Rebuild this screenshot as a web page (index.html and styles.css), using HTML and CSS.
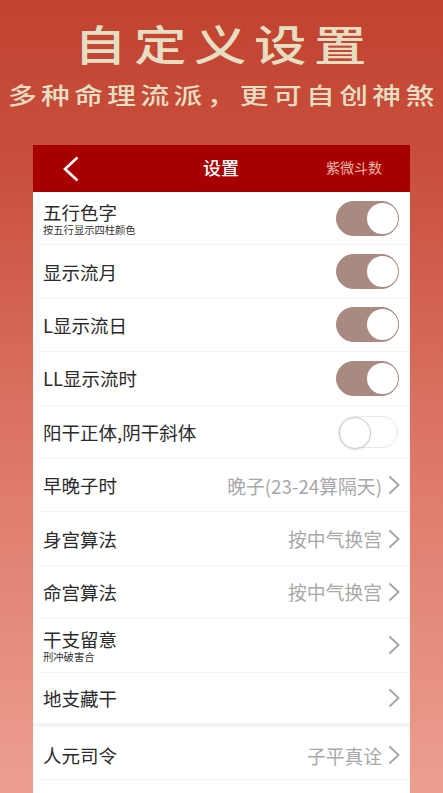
FILE: index.html
```html
<!DOCTYPE html>
<html lang="zh">
<head>
<meta charset="utf-8">
<title>自定义设置</title>
<link rel="stylesheet" href="styles.css">
</head>
<body>
<header class="promo">
  <h1 class="promo-title">自定义设置</h1>
  <p class="promo-sub">多种命理流派，更可自创神煞</p>
</header>
<main class="card">
  <div class="nav">
    <svg class="nav-back" width="18" height="26" viewBox="0 0 18 26"><path d="M15.500 1.500 L3 13 L15.500 24.500" fill="none" stroke="#fff" stroke-width="2.600"/></svg>
    <div class="nav-title">设置</div>
    <div class="nav-right">紫微斗数</div>
  </div>
  <div class="row"><div class="label"><div>五行色字</div><div class="hint">按五行显示四柱颜色</div></div><span class="switch on"></span></div>
  <div class="row"><div class="label">显示流月</div><span class="switch on"></span></div>
  <div class="row"><div class="label">L显示流日</div><span class="switch on"></span></div>
  <div class="row"><div class="label">LL显示流时</div><span class="switch on"></span></div>
  <div class="row"><div class="label">阳干正体,阴干斜体</div><span class="switch"></span></div>
  <div class="row"><div class="label">早晚子时</div><div class="value">晚子(23-24算隔天)</div><svg class="chev" width="12" height="20" viewBox="0 0 12 20"><path d="M1.500 1.500 L10.500 10 L1.500 18.500" fill="none" stroke="#a3a3a3" stroke-width="1.800"/></svg></div>
  <div class="row"><div class="label">身宫算法</div><div class="value">按中气换宫</div><svg class="chev" width="12" height="20" viewBox="0 0 12 20"><path d="M1.500 1.500 L10.500 10 L1.500 18.500" fill="none" stroke="#a3a3a3" stroke-width="1.800"/></svg></div>
  <div class="row"><div class="label">命宫算法</div><div class="value">按中气换宫</div><svg class="chev" width="12" height="20" viewBox="0 0 12 20"><path d="M1.500 1.500 L10.500 10 L1.500 18.500" fill="none" stroke="#a3a3a3" stroke-width="1.800"/></svg></div>
  <div class="row"><div class="label"><div>干支留意</div><div class="hint">刑冲破害合</div></div><svg class="chev" width="12" height="20" viewBox="0 0 12 20"><path d="M1.500 1.500 L10.500 10 L1.500 18.500" fill="none" stroke="#a3a3a3" stroke-width="1.800"/></svg></div>
  <div class="row row-end"><div class="label">地支藏干</div><svg class="chev" width="12" height="20" viewBox="0 0 12 20"><path d="M1.500 1.500 L10.500 10 L1.500 18.500" fill="none" stroke="#a3a3a3" stroke-width="1.800"/></svg></div>
  <div class="row row-last"><div class="label">人元司令</div><div class="value">子平真诠</div><svg class="chev" width="12" height="20" viewBox="0 0 12 20"><path d="M1.500 1.500 L10.500 10 L1.500 18.500" fill="none" stroke="#a3a3a3" stroke-width="1.800"/></svg></div>
</main>
</body>
</html>
```
FILE: styles.css
```css
* { box-sizing: border-box; }
html, body { margin: 0; height: 793px; overflow: hidden; }
body {
  width: 443px;
  background: linear-gradient(180deg, #c14330 0%, #c9503e 22%, #dc7566 55%, #ec9f90 100%);
  font-family: "Noto Sans CJK SC", "Noto Sans", sans-serif;
}
.promo { height: 145px; padding-top: 17px; display: flex; flex-direction: column; align-items: center; color: #e6dec2; }
.promo-title { margin: 0; font-size: 42px; line-height: 52px; font-weight: 500; letter-spacing: 6px; margin-right: -6px; white-space: nowrap; transform: scaleX(1.25); }
.promo-sub { margin: 9px 0 0; font-size: 23px; line-height: 32px; font-weight: 500; letter-spacing: 3.500px; margin-right: -3.500px; white-space: nowrap; transform: scaleX(1.25); }
.card { width: 377px; margin-left: 33px; background: #fff; height: 648px; overflow: hidden; }
.nav { height: 47px; background: #a80000; display: flex; align-items: center; position: relative; color: #fff; }
.nav-back { margin-left: 29px; }
.nav-title { position: absolute; left: 170px; top: -1px; font-size: 18px; font-weight: 500; line-height: 47px; }
.nav-right { position: absolute; right: 28px; top: -1px; font-size: 14px; line-height: 47px; color: #eab5ab; }
.row { height: 53.400px; margin-left: 7px; padding: 0 10px 0 4px; display: flex; align-items: center; border-bottom: 1px solid #f5f5f7; }
.row > .label { margin-left: -1px; }
.row-end { height: 54.400px; border-bottom: 4px solid #f3f3f8; margin-left: 0; padding-left: 11px; }
.row-last { padding-top: 4px; }
.label { flex: 1; font-size: 18.500px; line-height: 22px; color: #2b2b2b; white-space: nowrap; }
.hint { font-size: 10.300px; line-height: 12px; margin-top: 1px; margin-bottom: -1px; color: #333; }
.value { font-size: 18.800px; color: #a8a8a8; margin-right: 6px; white-space: nowrap; }
.chev { flex: none; }
.switch { flex: none; position: relative; width: 60px; height: 32px; border-radius: 16px; border: 1px solid #e8e8e8; background: #fff; margin-right: 2px; }
.switch::after { content: ""; position: absolute; left: 0; top: 0; width: 30px; height: 30px; border-radius: 50%; background: #fff; border: 1px solid #ccc; box-shadow: 0 1px 2px rgba(0,0,0,.12); }
.switch.on { width: 63px; height: 35px; border-radius: 18px; margin-right: 1px; background: #a98a80; border-color: #a98a80; }
.switch.on::after { left: 30px; top: 1px; width: 31px; height: 31px; border: none; box-shadow: none; }
```
